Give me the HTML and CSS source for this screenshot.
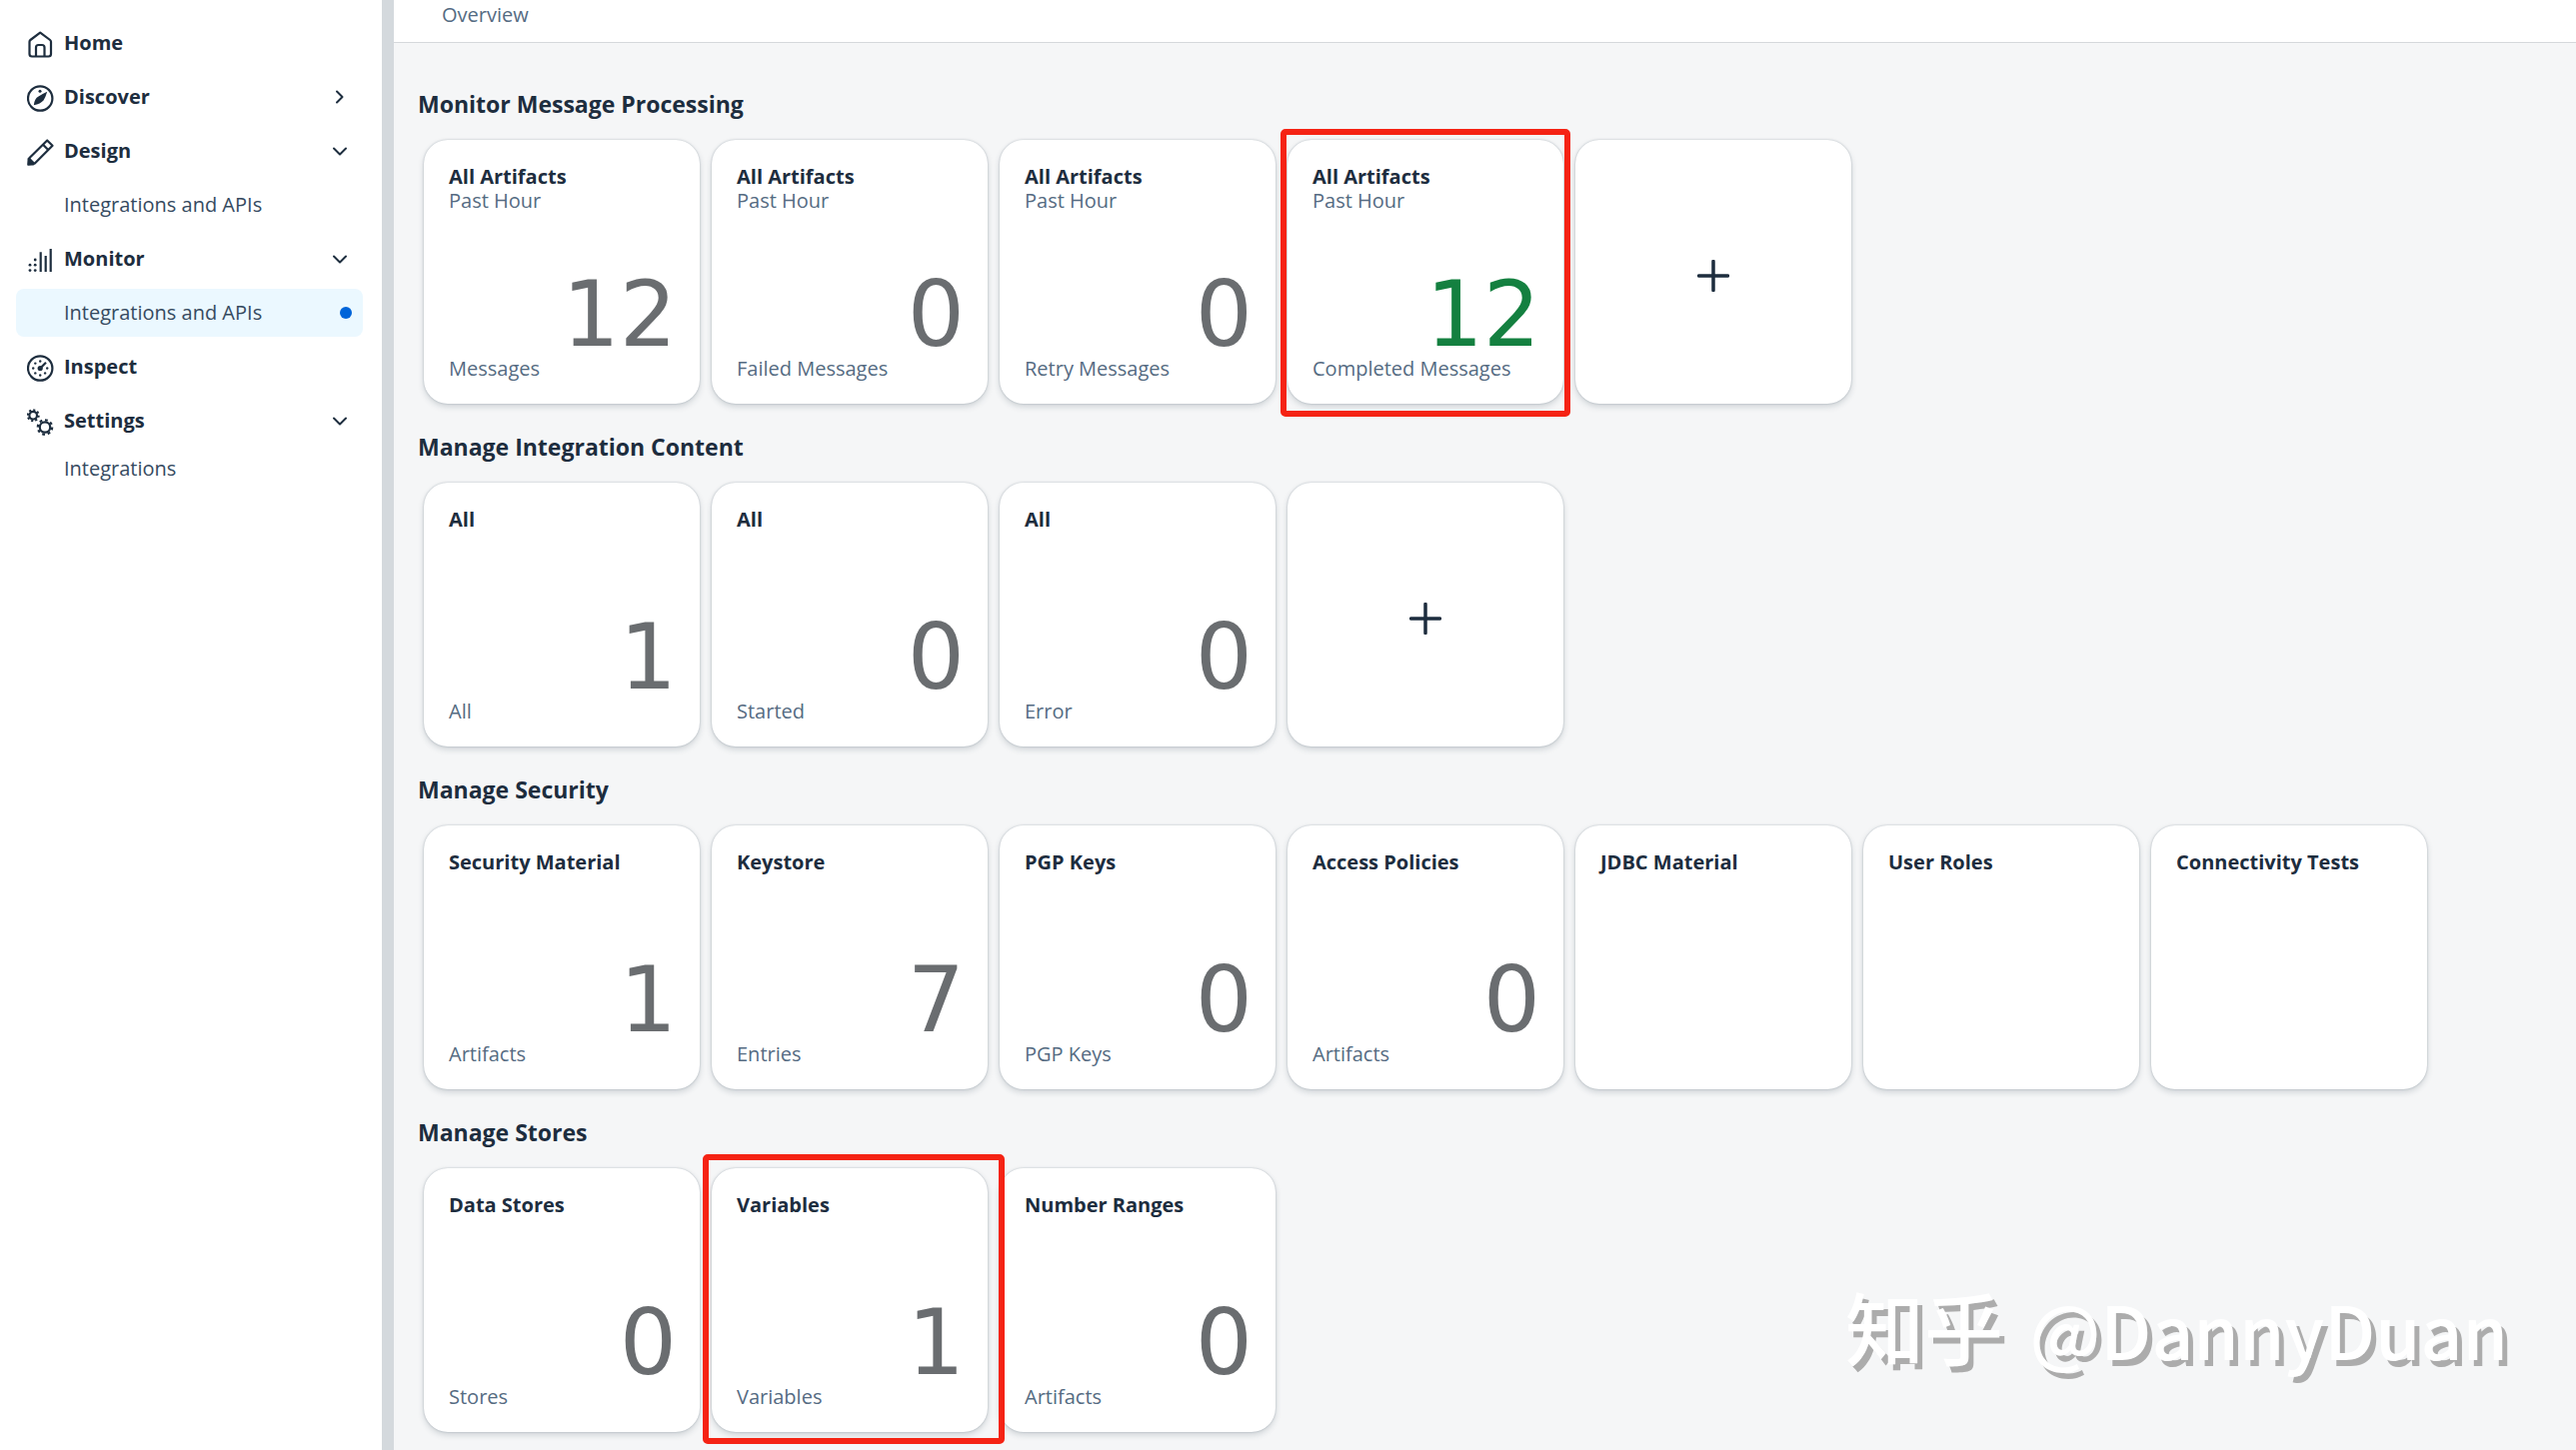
FILE: index.html
```
<!DOCTYPE html>
<html lang="en">
<head>
    <meta charset="UTF-8">
    <meta name="viewport" content="width=device-width, initial-scale=1.0">
    <link rel="stylesheet" href="styles.css">
    <title>Overview - Integrations and APIs</title>
</head>
<body>
    <!-- Side navigation -->
    <nav class="sidebar">
        <a class="nav-item" href="#">
            <svg class="icon" viewBox="0 0 27 27">
                <path d="M13.2 1.6 3.4 9q-.9.7-.9 1.8V23q0 2.5 2.5 2.5h16.5q2.5 0 2.5-2.5V10.8q0-1.1-.9-1.8z"/>
                <path d="M9 25.5v-9q0-2.5 2.5-2.5h3.5q2.5 0 2.5 2.5v9"/>
            </svg>
            <span>Home</span>
        </a>
        <a class="nav-item" href="#">
            <svg class="icon" viewBox="0 0 27 27">
                <circle cx="13.2" cy="13.5" r="12.2"/>
                <path class="fill" d="M6.8 20.2Q7.5 13.5 11.5 11.5 14.5 9.5 20.2 6.8 18.5 12.5 16.5 15.5 13.5 19 6.8 20.2z"/>
                <circle class="fill" cx="13" cy="6.2" r="1.5"/>
            </svg>
            <span>Discover</span>
            <svg class="chevron" viewBox="0 0 24 24"><path d="M9 6.5 14.5 12 9 17.5"/></svg>
        </a>
        <a class="nav-item" href="#">
            <svg class="icon" viewBox="0 0 27 27">
                <path d="M1.5 25.5 2.5 19 20.2 1.5 25.5 6.8 7.8 24.5z"/>
                <path d="M16 5.7 21.3 11"/>
                <path class="fill" d="M.5 26.5V19.5L2.5 18.5 8.5 24.5 6.5 26.5z"/>
            </svg>
            <span>Design</span>
            <svg class="chevron" viewBox="0 0 24 24"><path d="M6 9.5 12 15.5 18 9.5"/></svg>
        </a>
        <a class="nav-item nav-sub" href="#"><span>Integrations and APIs</span></a>
        <a class="nav-item" href="#">
            <svg class="icon" viewBox="0 0 27 27">
                <path d="M13.7 5.3V25M18.7 9V25M23.7 2V25"/>
                <g class="fill">
                    <circle cx="3" cy="18.2" r="1.4"/>
                    <circle cx="3" cy="23.6" r="1.4"/>
                    <circle cx="8.2" cy="13" r="1.4"/>
                    <circle cx="8.2" cy="18.2" r="1.4"/>
                    <circle cx="8.2" cy="23.6" r="1.4"/>
                </g>
            </svg>
            <span>Monitor</span>
            <svg class="chevron" viewBox="0 0 24 24"><path d="M6 9.5 12 15.5 18 9.5"/></svg>
        </a>
        <a class="nav-item nav-sub selected" href="#">
            <span>Integrations and APIs</span>
            <i class="dot"></i>
        </a>
        <a class="nav-item" href="#">
            <svg class="icon" viewBox="0 0 27 27">
                <circle cx="13.2" cy="13.5" r="12.2"/>
                <path d="M13.2 13.5 19 7.7"/>
                <g class="fill">
                    <circle cx="13.2" cy="13.5" r="2.6"/>
                    <circle cx="13.2" cy="6.5" r="1.2"/>
                    <circle cx="13.2" cy="20.5" r="1.2"/>
                    <circle cx="6.2" cy="13.5" r="1.2"/>
                    <circle cx="20.2" cy="13.5" r="1.2"/>
                    <circle cx="8.3" cy="8.6" r="1.2"/>
                    <circle cx="8.3" cy="18.4" r="1.2"/>
                    <circle cx="18.1" cy="18.4" r="1.2"/>
                </g>
            </svg>
            <span>Inspect</span>
        </a>
        <a class="nav-item last" href="#">
            <svg class="icon" viewBox="0 0 27 27">
                <circle cx="6.2" cy="6.7" r="3.8"/>
                <circle class="teeth" cx="6.2" cy="6.7" r="5.4" pathLength="16"/>
                <circle cx="18" cy="18.5" r="5.2"/>
                <circle class="teeth" cx="18" cy="18.5" r="7.2" pathLength="16"/>
            </svg>
            <span>Settings</span>
            <svg class="chevron" viewBox="0 0 24 24"><path d="M6 9.5 12 15.5 18 9.5"/></svg>
        </a>
        <a class="nav-item nav-sub" href="#"><span>Integrations</span></a>
    </nav>

    <!-- Page content -->
    <div class="page">
        <header class="page-header">Overview</header>

        <main>
            <section>
                <h2>Monitor Message Processing</h2>
                <div class="tiles">
                    <a class="tile" href="#">
                        <h3>All Artifacts</h3>
                        <p>Past Hour</p>
                        <strong>12</strong>
                        <footer>Messages</footer>
                    </a>
                    <a class="tile" href="#">
                        <h3>All Artifacts</h3>
                        <p>Past Hour</p>
                        <strong>0</strong>
                        <footer>Failed Messages</footer>
                    </a>
                    <a class="tile" href="#">
                        <h3>All Artifacts</h3>
                        <p>Past Hour</p>
                        <strong>0</strong>
                        <footer>Retry Messages</footer>
                    </a>
                    <a class="tile marked" href="#">
                        <h3>All Artifacts</h3>
                        <p>Past Hour</p>
                        <strong class="good">12</strong>
                        <footer>Completed Messages</footer>
                    </a>
                    <button class="tile add" type="button" aria-label="Add tile">
                        <svg viewBox="0 0 32 32"><path d="M16 1.5V30.5M1.5 16H30.5"/></svg>
                    </button>
                </div>
            </section>

            <section>
                <h2>Manage Integration Content</h2>
                <div class="tiles">
                    <a class="tile" href="#">
                        <h3>All</h3>
                        <strong>1</strong>
                        <footer>All</footer>
                    </a>
                    <a class="tile" href="#">
                        <h3>All</h3>
                        <strong>0</strong>
                        <footer>Started</footer>
                    </a>
                    <a class="tile" href="#">
                        <h3>All</h3>
                        <strong>0</strong>
                        <footer>Error</footer>
                    </a>
                    <button class="tile add" type="button" aria-label="Add tile">
                        <svg viewBox="0 0 32 32"><path d="M16 1.5V30.5M1.5 16H30.5"/></svg>
                    </button>
                </div>
            </section>

            <section>
                <h2>Manage Security</h2>
                <div class="tiles">
                    <a class="tile" href="#">
                        <h3>Security Material</h3>
                        <strong>1</strong>
                        <footer>Artifacts</footer>
                    </a>
                    <a class="tile" href="#">
                        <h3>Keystore</h3>
                        <strong>7</strong>
                        <footer>Entries</footer>
                    </a>
                    <a class="tile" href="#">
                        <h3>PGP Keys</h3>
                        <strong>0</strong>
                        <footer>PGP Keys</footer>
                    </a>
                    <a class="tile" href="#">
                        <h3>Access Policies</h3>
                        <strong>0</strong>
                        <footer>Artifacts</footer>
                    </a>
                    <a class="tile" href="#"><h3>JDBC Material</h3></a>
                    <a class="tile" href="#"><h3>User Roles</h3></a>
                    <a class="tile" href="#"><h3>Connectivity Tests</h3></a>
                </div>
            </section>

            <section>
                <h2>Manage Stores</h2>
                <div class="tiles">
                    <a class="tile" href="#">
                        <h3>Data Stores</h3>
                        <strong>0</strong>
                        <footer>Stores</footer>
                    </a>
                    <a class="tile marked wide" href="#">
                        <h3>Variables</h3>
                        <strong>1</strong>
                        <footer>Variables</footer>
                    </a>
                    <a class="tile" href="#">
                        <h3>Number Ranges</h3>
                        <strong>0</strong>
                        <footer>Artifacts</footer>
                    </a>
                </div>
            </section>
        </main>
    </div>

    <div class="watermark"><span lang="zh">知乎</span> @DannyDuan</div>
</body>
</html>
```
FILE: styles.css
```
/* =======================
   General
======================= */
* {
    box-sizing: border-box;
}

body {
    margin: 0;
    min-height: 100vh;
    display: flex;
    position: relative;
    font-family: "Open Sans", "Noto Sans", sans-serif;
    font-size: 20px;
    color: #1d2d3e;
    background-color: #fff;
}

a {
    color: inherit;
    text-decoration: none;
}

h2, h3, p {
    margin: 0;
}

/* =======================
   Side navigation
======================= */
.sidebar {
    width: 382px;
    flex-shrink: 0;
    padding: 19px 19px 19px 16px;
}

.nav-item {
    display: flex;
    align-items: center;
    gap: 10px;
    height: 48px;
    margin-bottom: 6px;
    padding: 0 11px;
    border-radius: 8px;
    font-weight: 700;
}

.nav-item.last {
    margin-bottom: 0;
}

.nav-item span {
    padding-bottom: 2px;
}

.nav-sub {
    padding-left: 48px;
    font-weight: 400;
    color: #354a5f;
}

.selected {
    background-color: #ebf8ff;
}

.icon {
    width: 27px;
    height: 27px;
    margin-top: 3px;
    fill: none;
    stroke: #1d2d3e;
    stroke-width: 2.2;
    stroke-linejoin: round;
}

.icon .fill {
    fill: #1d2d3e;
    stroke: none;
}

.icon .teeth {
    stroke-dasharray: 1 1;
}

.chevron {
    width: 24px;
    height: 24px;
    margin-left: auto;
    fill: none;
    stroke: #1d2d3e;
    stroke-width: 2;
    stroke-linecap: round;
    stroke-linejoin: round;
}

.dot {
    width: 12px;
    height: 12px;
    margin-left: auto;
    border-radius: 50%;
    background-color: #0064d9;
}

/* =======================
   Page
======================= */
.page {
    flex: 1;
    min-width: 0;
    border-left: 12px solid #d4d9dd;
    background-color: #f5f6f7;
}

.page-header {
    height: 43px;
    padding-left: 48px;
    line-height: 30px;
    color: #556b82;
    background-color: #fff;
    border-bottom: 1px solid #d5d8db;
}

main {
    padding: 43px 24px 0;
}

section {
    margin-bottom: 25px;
}

main section:last-child {
    margin-bottom: 0;
}

h2 {
    margin-bottom: 18px;
    font-size: 23px;
    line-height: 36px;
}

/* =======================
   Tiles
======================= */
.tiles {
    display: flex;
    gap: 12px;
    padding-left: 6px;
}

.tile {
    position: relative;
    display: flex;
    flex-direction: column;
    width: 276px;
    height: 264px;
    padding: 25px 25px 23px;
    border: none;
    border-radius: 24px;
    background-color: #fff;
    box-shadow: 0 0 2px rgba(34, 53, 72, 0.3), 0 3px 6px rgba(34, 53, 72, 0.18);
    line-height: 24px;
    color: #556b82;
}

.tile h3 {
    font-size: 20px;
    color: #1d2d3e;
}

.tile strong {
    margin-top: auto;
    margin-right: -2px;
    font-family: "DejaVu Sans", sans-serif;
    font-size: 90px;
    font-weight: 400;
    line-height: 84px;
    text-align: right;
    color: #6a6d70;
}

.tile .good {
    color: #148040;
}

.tile.add {
    align-items: center;
    justify-content: center;
    padding: 8px 0 0;
    cursor: pointer;
}

.add svg {
    width: 32px;
    height: 32px;
    fill: none;
    stroke: #1d2d3e;
    stroke-width: 3.5;
    stroke-linecap: round;
}

/* Red frame drawn round a tile */
.marked::after {
    content: "";
    position: absolute;
    z-index: 1;
    inset: -11px -7px -13px;
    border: 6px solid #f52314;
    border-radius: 5px;
}

.marked.wide::after {
    inset: -14px -17px -12px -9px;
}

.watermark {
    position: absolute;
    right: 68px;
    bottom: 84px;
    font-family: "Noto Sans CJK SC", sans-serif;
    font-size: 73px;
    font-weight: 500;
    line-height: 76px;
    color: #fff;
    text-shadow: 5px 6px 0 #acacac;
}

.watermark span {
    margin-right: 10px;
    font-size: 79px;
}
```
